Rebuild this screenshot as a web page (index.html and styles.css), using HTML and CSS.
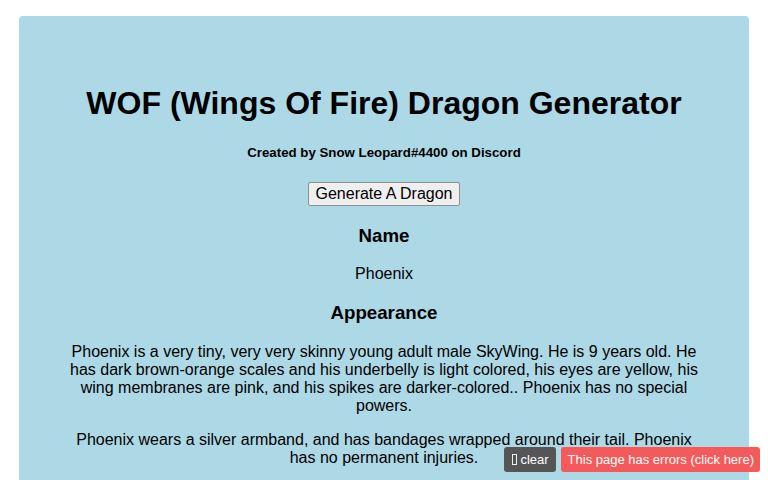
FILE: index.html
```html
<!DOCTYPE html>
<html>
<head>
<meta charset="utf-8">
<title>WOF Dragon Generator</title>
<link rel="stylesheet" href="styles.css">
</head>
<body>
<main class="card">
  <h1 class="title">WOF (Wings Of Fire) Dragon Generator</h1>
  <h5 class="credit">Created by Snow Leopard#4400 on Discord</h5>
  <div class="actions"><button class="gen-btn" type="button">Generate A Dragon</button></div>
  <h3 class="section">Name</h3>
  <p class="text">Phoenix</p>
  <h3 class="section">Appearance</h3>
  <p class="text">Phoenix is a very tiny, very very skinny young adult male SkyWing. He is 9 years old. He has dark brown-orange scales and his underbelly is light colored, his eyes are yellow, his wing membranes are pink, and his spikes are darker-colored.. Phoenix has no special powers.</p>
  <p class="text">Phoenix wears a silver armband, and has bandages wrapped around their tail. Phoenix has no permanent injuries.</p>
</main>
<div class="toolbar">
  <button class="tool tool-clear" type="button"><span class="tofu"></span> clear</button>
  <button class="tool tool-error" type="button">This page has errors (click here)</button>
</div>
</body>
</html>
```

FILE: styles.css
```css
html, body {
  margin: 0;
  padding: 0;
  background: #ffffff;
}
body {
  font-family: "Liberation Sans", Arial, sans-serif;
  color: #000;
  padding: 16px 19px 0 19px;
  height: 480px;
  box-sizing: border-box;
  overflow: hidden;
}
.card {
  background: #add8e6;
  border-radius: 4px;
  padding: 48px 48px 60px 48px;
  text-align: center;
  min-height: 600px;
}
.title {
  font-size: 32px;
  font-weight: bold;
  margin: 21.44px 0;
}
.credit {
  font-size: 13.28px;
  font-weight: bold;
  margin: 22.18px 0;
}
.actions {
  margin: 0;
}
.gen-btn {
  font-family: "Liberation Sans", Arial, sans-serif;
  font-size: 16px;
  color: #000;
  background: #efefef;
  border: 1px solid #8f8f8f;
  border-radius: 2px;
  padding: 1px 7px;
  height: 24px;
  line-height: 18px;
}
.section {
  font-size: 18.72px;
  font-weight: bold;
  margin: 18.72px 0;
}
.text {
  font-size: 16px;
  line-height: 18px;
  margin: 16px 0;
}
.toolbar {
  position: fixed;
  right: 8px;
  bottom: 8px;
  display: flex;
  gap: 5px;
}
.tool {
  font-family: "Liberation Sans", Arial, sans-serif;
  font-size: 13px;
  color: #fff;
  border: none;
  border-radius: 3px;
  height: 25px;
  line-height: 25px;
}
.tool-clear {
  background: #555555;
  padding: 0 7px 0 8px;
}
.tool-error {
  background: #f55a5a;
  padding: 0 6px 0 7px;
}
.tofu {
  display: inline-block;
  width: 3px;
  height: 9px;
  border: 1px solid #fff;
  vertical-align: -1px;
  opacity: 0.9;
}
```
